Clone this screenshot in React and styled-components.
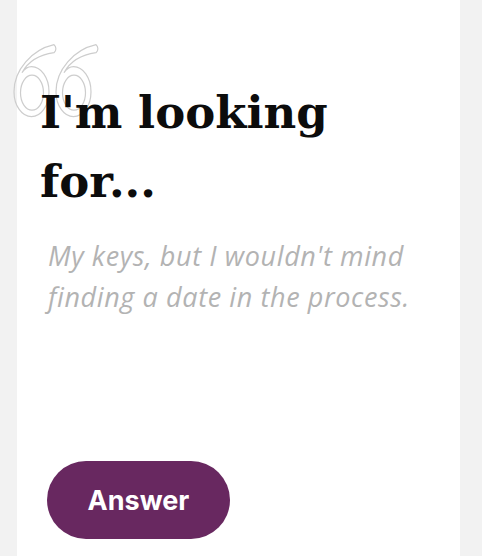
import React from "react";
import styled, { createGlobalStyle } from "styled-components";

const GlobalStyle = createGlobalStyle`
  html, body {
    margin: 0;
    padding: 0;
    background: #f2f2f2;
  }
  * {
    box-sizing: border-box;
  }
`;

// one outlined "6" shaped quote glyph
const QuoteMark = ({ x = 0 }) => (
  <g transform={`translate(${x} 0.7)`}>
    <path d="M40 0 C18 5 0 25 0 47 C0 61 8 72 17.5 72 C27 72 35 61 35 47 C35 33 27 22 17.5 22 C13 22 10 25 8 28 C14 17 26 10 40 8 C42.5 6 42.5 2 40 0 Z" />
    <ellipse cx="18" cy="48" rx="11.5" ry="17.5" />
  </g>
);

const App = () => {
  return (
    <>
      <GlobalStyle />
      <Page>
        <Card>
          <Quote viewBox="0 0 86 74" aria-hidden="true">
            <QuoteMark x={1} />
            <QuoteMark x={43} />
          </Quote>
          <Title>I'm looking for...</Title>
          <Answer>My keys, but I wouldn't mind finding a date in the process.</Answer>
          <AnswerButton>Answer</AnswerButton>
        </Card>
      </Page>
    </>
  );
};

export default App;

const Page = styled.div`
  min-height: 556px;
  padding: 0 22px 0 17px;
  display: flex;
`;

const Card = styled.div`
  position: relative;
  flex: 1;
  min-height: 556px;
  background: #ffffff;
  padding: 78px 20px 0 23px;
  display: flex;
  flex-direction: column;
`;

const Quote = styled.svg`
  position: absolute;
  left: -4px;
  top: 44px;
  width: 86px;
  height: 74px;
  fill: none;
  stroke: #cdcdcd;
  stroke-width: 1.2;
`;

const Title = styled.h1`
  position: relative;
  margin: 0;
  width: 310px;
  font-family: "DejaVu Serif", serif;
  font-weight: 700;
  font-size: 45px;
  line-height: 69px;
  color: #0c0c0c;
`;

const Answer = styled.p`
  margin: 19px 0 0 8px;
  font-family: "Open Sans", sans-serif;
  font-style: italic;
  font-size: 27px;
  line-height: 41px;
  letter-spacing: 0.6px;
  color: #b3b3b3;
`;

const AnswerButton = styled.button`
  margin: 144px 0 0 7px;
  align-self: flex-start;
  width: 183px;
  height: 78px;
  border: none;
  border-radius: 39px;
  background: #682860;
  color: #ffffff;
  font-family: "Inter", sans-serif;
  font-weight: 700;
  font-size: 27px;
  cursor: pointer;
`;
